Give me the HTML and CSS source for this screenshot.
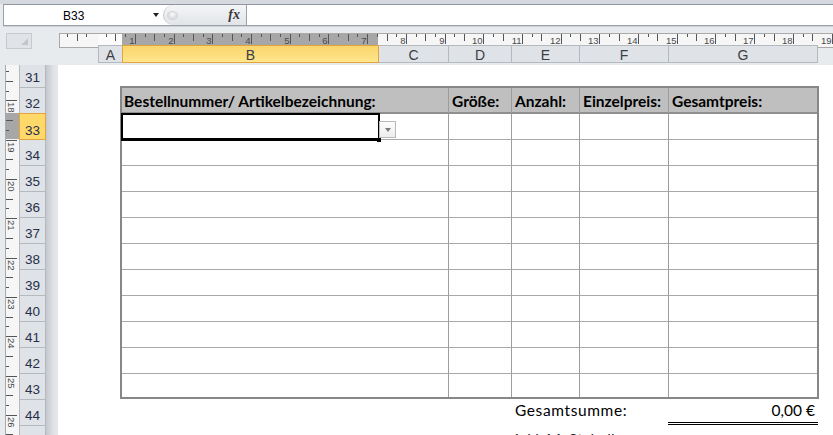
FILE: index.html
```html
<!DOCTYPE html>
<html lang="de">
<head>
<meta charset="utf-8">
<title>Bestellformular</title>
<link rel="stylesheet" href="styles.css">
</head>
<body>
<div class="app">
  <div class="topstrip"></div>
  <div class="fbar">
    <div class="namebox"><span class="nb-text">B33</span><span class="nb-arrow"></span></div>
    <div class="fxzone"><span class="grip"></span><span class="fx">fx</span></div>
    <div class="finput"></div>
  </div>
  <div class="rulerbar">
    <div class="corner"><span class="corner-tri"></span></div>
    <svg class="hruler" width="774" height="15" viewBox="0 0 774 15">
      <rect x="0.5" y="0.5" width="774" height="14" fill="#f6f6f6" stroke="#a9a9a9"/>
      <rect x="39" y="1" width="24" height="13" fill="#fbfbfb"/>
      <rect x="63" y="1" width="256" height="13" fill="#a7a7a7"/>
      <path stroke="#555" stroke-width="1" fill="none" d="M76.5 1V11M115.5 1V11M153.5 1V11M192.5 1V11M231.5 1V11M269.5 1V11M308.5 1V11M347.5 1V11M386.5 1V11M424.5 1V11M463.5 1V11M502.5 1V11M540.5 1V11M579.5 1V11M618.5 1V11M656.5 1V11M695.5 1V11M734.5 1V11M773.5 1V11
      M18.5 1V8M56.5 1V8M95.5 1V8M134.5 1V8M173.5 1V8M211.5 1V8M250.5 1V8M289.5 1V8M328.5 1V8M366.5 1V8M405.5 1V8M444.5 1V8M482.5 1V8M521.5 1V8M560.5 1V8M598.5 1V8M637.5 1V8M676.5 1V8M715.5 1V8M753.5 1V8
      M8.5 1V4M27.5 1V4M47.5 1V4M66.5 1V4M86.5 1V4M105.5 1V4M124.5 1V4M144.5 1V4M163.5 1V4M182.5 1V4M202.5 1V4M221.5 1V4M240.5 1V4M260.5 1V4M279.5 1V4M298.5 1V4M318.5 1V4M337.5 1V4M357.5 1V4M376.5 1V4M395.5 1V4M434.5 1V4M473.5 1V4M511.5 1V4M550.5 1V4M589.5 1V4M628.5 1V4M666.5 1V4M705.5 1V4M744.5 1V4"/>
      <g class="rnum" text-anchor="end">
        <text x="75.5" y="10.5">1</text><text x="114.5" y="10.5">2</text><text x="152.5" y="10.5">3</text><text x="191.5" y="10.5">4</text><text x="230.5" y="10.5">5</text><text x="268.5" y="10.5">6</text><text x="307.5" y="10.5">7</text><text x="346.5" y="10.5">8</text><text x="385.5" y="10.5">9</text><text x="423.5" y="10.5">10</text><text x="462.5" y="10.5">11</text><text x="501.5" y="10.5">12</text><text x="539.5" y="10.5">13</text><text x="578.5" y="10.5">14</text><text x="617.5" y="10.5">15</text><text x="655.5" y="10.5">16</text><text x="694.5" y="10.5">17</text><text x="733.5" y="10.5">18</text><text x="772.5" y="10.5">19</text>
      </g>
    </svg>
  </div>
  <div class="colheads">
    <div class="ch ch-a">A</div>
    <div class="ch ch-b">B</div>
    <div class="ch ch-c">C</div>
    <div class="ch ch-d">D</div>
    <div class="ch ch-e">E</div>
    <div class="ch ch-f">F</div>
    <div class="ch ch-g">G</div>
  </div>
  <div class="main">
    <svg class="vruler" width="19" height="370" viewBox="0 0 19 370">
      <rect x="5.5" y="-1" width="14" height="372" fill="#f6f6f6" stroke="#a9a9a9"/>
      <rect x="6" y="48" width="13" height="26" fill="#a7a7a7"/>
      <path stroke="#555" stroke-width="1" fill="none" d="M6 35.5H17M6 75.5H17M6 114.5H17M6 153.5H17M6 193.5H17M6 232.5H17M6 271.5H17M6 311.5H17M6 350.5H17
      M6 16.5H13M6 55.5H13M6 94.5H13M6 134.5H13M6 173.5H13M6 212.5H13M6 252.5H13M6 291.5H13M6 330.5H13M6 369.5H13
      M6 6.5H9M6 26.5H9M6 65.5H9M6 104.5H9M6 143.5H9M6 183.5H9M6 222.5H9M6 261.5H9M6 301.5H9M6 340.5H9"/>
      <g class="rnum">
        <text transform="translate(8 37) rotate(90)">18</text>
        <text transform="translate(8 77) rotate(90)">19</text>
        <text transform="translate(8 116) rotate(90)">20</text>
        <text transform="translate(8 155) rotate(90)">21</text>
        <text transform="translate(8 195) rotate(90)">22</text>
        <text transform="translate(8 234) rotate(90)">23</text>
        <text transform="translate(8 273) rotate(90)">24</text>
        <text transform="translate(8 313) rotate(90)">25</text>
        <text transform="translate(8 352) rotate(90)">26</text>
      </g>
    </svg>
    <div class="rowheads">
      <div class="rh rh-first">31</div>
      <div class="rh">32</div>
      <div class="rh rh-sel">33</div>
      <div class="rh">34</div>
      <div class="rh">35</div>
      <div class="rh">36</div>
      <div class="rh">37</div>
      <div class="rh">38</div>
      <div class="rh">39</div>
      <div class="rh">40</div>
      <div class="rh">41</div>
      <div class="rh">42</div>
      <div class="rh">43</div>
      <div class="rh">44</div>
      <div class="rh"></div>
    </div>
    <div class="shade"></div>
    <div class="sheet">
      <div class="grid">
        <div class="hc hc-first">Bestellnummer/ Artikelbezeichnung:</div>
        <div class="hc">Größe:</div>
        <div class="hc">Anzahl:</div>
        <div class="hc">Einzelpreis:</div>
        <div class="hc">Gesamtpreis:</div>
        <div class="c"></div><div class="c"></div><div class="c"></div><div class="c"></div><div class="c"></div>
        <div class="c"></div><div class="c"></div><div class="c"></div><div class="c"></div><div class="c"></div>
        <div class="c"></div><div class="c"></div><div class="c"></div><div class="c"></div><div class="c"></div>
        <div class="c"></div><div class="c"></div><div class="c"></div><div class="c"></div><div class="c"></div>
        <div class="c"></div><div class="c"></div><div class="c"></div><div class="c"></div><div class="c"></div>
        <div class="c"></div><div class="c"></div><div class="c"></div><div class="c"></div><div class="c"></div>
        <div class="c"></div><div class="c"></div><div class="c"></div><div class="c"></div><div class="c"></div>
        <div class="c"></div><div class="c"></div><div class="c"></div><div class="c"></div><div class="c"></div>
        <div class="c"></div><div class="c"></div><div class="c"></div><div class="c"></div><div class="c"></div>
        <div class="c"></div><div class="c"></div><div class="c"></div><div class="c"></div><div class="c"></div>
        <div class="c"></div><div class="c"></div><div class="c"></div><div class="c"></div><div class="c"></div>
      </div>
      <div class="totals">
        <div class="tl">Gesamtsumme:</div>
        <div class="tv">0,00 €</div>
      </div>
      <div class="note">inkl. Maßtabelle</div>
      <div class="sel"></div>
      <div class="fill"></div>
      <div class="ddbtn"><span class="dd-tri"></span></div>
    </div>
  </div>
</div>
</body>
</html>
```

FILE: styles.css
```css
html, body {
  margin: 0;
  padding: 0;
}
body {
  width: 833px;
  height: 435px;
  overflow: hidden;
  background: #e8ebee;
  font-family: "Liberation Sans", Arial, sans-serif;
}
.app {
  width: 833px;
  height: 435px;
  overflow: hidden;
  display: flex;
  flex-direction: column;
}
.topstrip {
  flex: none;
  height: 4px;
  background: #d6dae0;
}
.fbar {
  flex: none;
  height: 20px;
  display: flex;
  margin-left: 3px;
  background: #fff;
  border-top: 1px solid #8f969e;
  border-bottom: 1px solid #9aa1a9;
  border-left: 1px solid #9aa1a9;
  box-shadow: 0 1px 0 #cfd3d8;
}
.namebox {
  width: 159px;
  flex: none;
  display: flex;
  align-items: center;
}
.nb-text {
  margin-left: 59px;
  font-size: 12px;
  color: #000;
  line-height: 14px;
  padding-top: 2px;
}
.nb-arrow {
  margin-left: auto;
  margin-right: 4px;
  width: 0;
  height: 0;
  border-left: 3.5px solid transparent;
  border-right: 3.5px solid transparent;
  border-top: 4px solid #222;
}
.fxzone {
  width: 84px;
  flex: none;
  display: flex;
  align-items: center;
  box-sizing: border-box;
  border-right: 1px solid #9aa1a9;
  border-left: 1px solid #c4c8cd;
  border-radius: 10px 0 0 10px;
  background: linear-gradient(#f4f5f7, #e1e4e8);
}
.grip {
  width: 9px;
  height: 7px;
  margin-left: 4px;
  border-radius: 50%;
  background: radial-gradient(circle at 50% 35%, #fafafa, #c9ccd0);
  box-shadow: 0 0 0 1px #d0d3d7;
}
.fx {
  margin-left: auto;
  margin-right: 6px;
  font-family: "Liberation Serif", "Times New Roman", serif;
  font-style: italic;
  font-weight: bold;
  font-size: 14px;
  color: #3a3a3a;
  line-height: 14px;
}
.finput {
  flex: 1;
  background: #fff;
}
.rulerbar {
  flex: none;
  height: 19px;
  box-sizing: border-box;
  padding-top: 7px;
  display: flex;
  align-items: flex-start;
}
.corner {
  flex: none;
  margin-left: 6px;
  width: 26px;
  height: 16px;
  box-sizing: border-box;
  border: 1px solid #c6cace;
  background: #e0e3e7;
  position: relative;
}
.corner-tri {
  position: absolute;
  right: 3px;
  bottom: 3px;
  width: 0;
  height: 0;
  border-left: 7px solid transparent;
  border-bottom: 7px solid #c3c7cc;
}
.hruler {
  flex: none;
  display: block;
  margin-left: 27px;
}
.rnum {
  font-family: "Liberation Sans", Arial, sans-serif;
  font-size: 9.5px;
  fill: #4a4a4a;
}
.colheads {
  flex: none;
  height: 18px;
  margin-left: 98px;
  display: flex;
  position: relative;
}
.ch {
  flex: none;
  box-sizing: border-box;
  height: 18px;
  border: 1px solid #b4b9bf;
  border-left: none;
  background: #dfe2e6;
  font-size: 14px;
  line-height: 15px;
  padding-top: 2px;
  text-align: center;
  color: #3b3f45;
}
.ch-a { width: 25px; border-left: 1px solid #b4b9bf; }
.ch-b {
  width: 257px;
  margin-left: -1px;
  border-left: 1px solid #e1a43f;
  border-color: #e1a43f;
  background: linear-gradient(#f9d56b, #ffe58c);
}
.ch-c { width: 70px; }
.ch-d { width: 63px; }
.ch-e { width: 68px; }
.ch-f { width: 89px; }
.ch-g { width: 149px; }
.main {
  flex: 1;
  min-height: 0;
  display: flex;
  padding-top: 2px;
  overflow: hidden;
}
.vruler {
  flex: none;
  display: block;
}
.rowheads {
  flex: none;
  width: 27px;
  box-sizing: border-box;
  border-left: 1px solid #b4b9bf;
  border-right: 1px solid #b4b9bf;
  background: #dfe2e6;
}
.rh {
  height: 26px;
  box-sizing: border-box;
  border-bottom: 1px solid #b4b9bf;
  font-size: 13.5px;
  line-height: 15px;
  padding-top: 8px;
  text-align: center;
  color: #26304a;
}
.rh-first {
  height: 23px;
  padding-top: 5px;
}
.rh-sel {
  margin: -1px -1px 0;
  height: 27px;
  padding-top: 9px;
  border: 1px solid #e1a43f;
  background: #fed96a;
}
.shade {
  flex: none;
  width: 12px;
  background: linear-gradient(to right, #c4c8ce, #d3d6da 35%, #dfe2e5 60%, #e6e8eb);
}
.sheet {
  flex: 1;
  position: relative;
  background: #fff;
  box-sizing: border-box;
  padding: 21px 0 0 62px;
}
.grid {
  display: grid;
  grid-template-columns: 327px 63px 68px 89px 148px;
  grid-template-rows: 26px repeat(10, 26px) 23px;
  width: 699px;
  box-sizing: border-box;
  border: 2px solid #878787;
  font-family: Lato, "Liberation Sans", sans-serif;
}
.hc {
  box-sizing: border-box;
  background: #bfbfbf;
  border-right: 1px solid #9c9c9c;
  border-bottom: 2px solid #8f8f8f;
  font-weight: bold;
  font-size: 15.5px;
  line-height: 22px;
  padding: 2px 0 0 3px;
  color: #000;
  white-space: nowrap;
}
.hc-first { padding-left: 2px; }
.c {
  box-sizing: border-box;
  border-right: 1px solid #9e9e9e;
  border-bottom: 1px solid #a8a8a8;
}
.grid > div:nth-child(5n) { border-right: none; }
.grid > .c:nth-last-child(-n+5) { border-bottom: none; }
.totals {
  display: flex;
  margin-left: 392px;
  font-family: Lato, "Liberation Sans", sans-serif;
  font-size: 15.5px;
  color: #000;
}
.tl {
  width: 156px;
  box-sizing: border-box;
  padding-left: 3px;
  line-height: 23px;
  letter-spacing: 0.6px;
}
.tv {
  width: 150px;
  box-sizing: border-box;
  height: 26px;
  line-height: 23px;
  text-align: right;
  padding-right: 3px;
  border-bottom: 3px double #000;
}
.note {
  margin-left: 395px;
  margin-top: 3px;
  font-family: Lato, "Liberation Sans", sans-serif;
  font-size: 15.5px;
  line-height: 22px;
  color: #222;
}
.sel {
  position: absolute;
  left: 63px;
  top: 48px;
  width: 259px;
  height: 28px;
  box-sizing: border-box;
  border: 2px solid #000;
  border-bottom-width: 3px;
}
.fill {
  position: absolute;
  left: 319px;
  top: 73px;
  width: 4px;
  height: 4px;
  background: #000;
}
.ddbtn {
  position: absolute;
  left: 321px;
  top: 56px;
  width: 17px;
  height: 17px;
  box-sizing: border-box;
  border: 1px solid #b9b9b9;
  background: linear-gradient(#fdfdfd, #ededed);
  display: flex;
  align-items: center;
  justify-content: center;
}
.dd-tri {
  width: 0;
  height: 0;
  border-left: 3.5px solid transparent;
  border-right: 3.5px solid transparent;
  border-top: 4px solid #7a7a7a;
}
```
